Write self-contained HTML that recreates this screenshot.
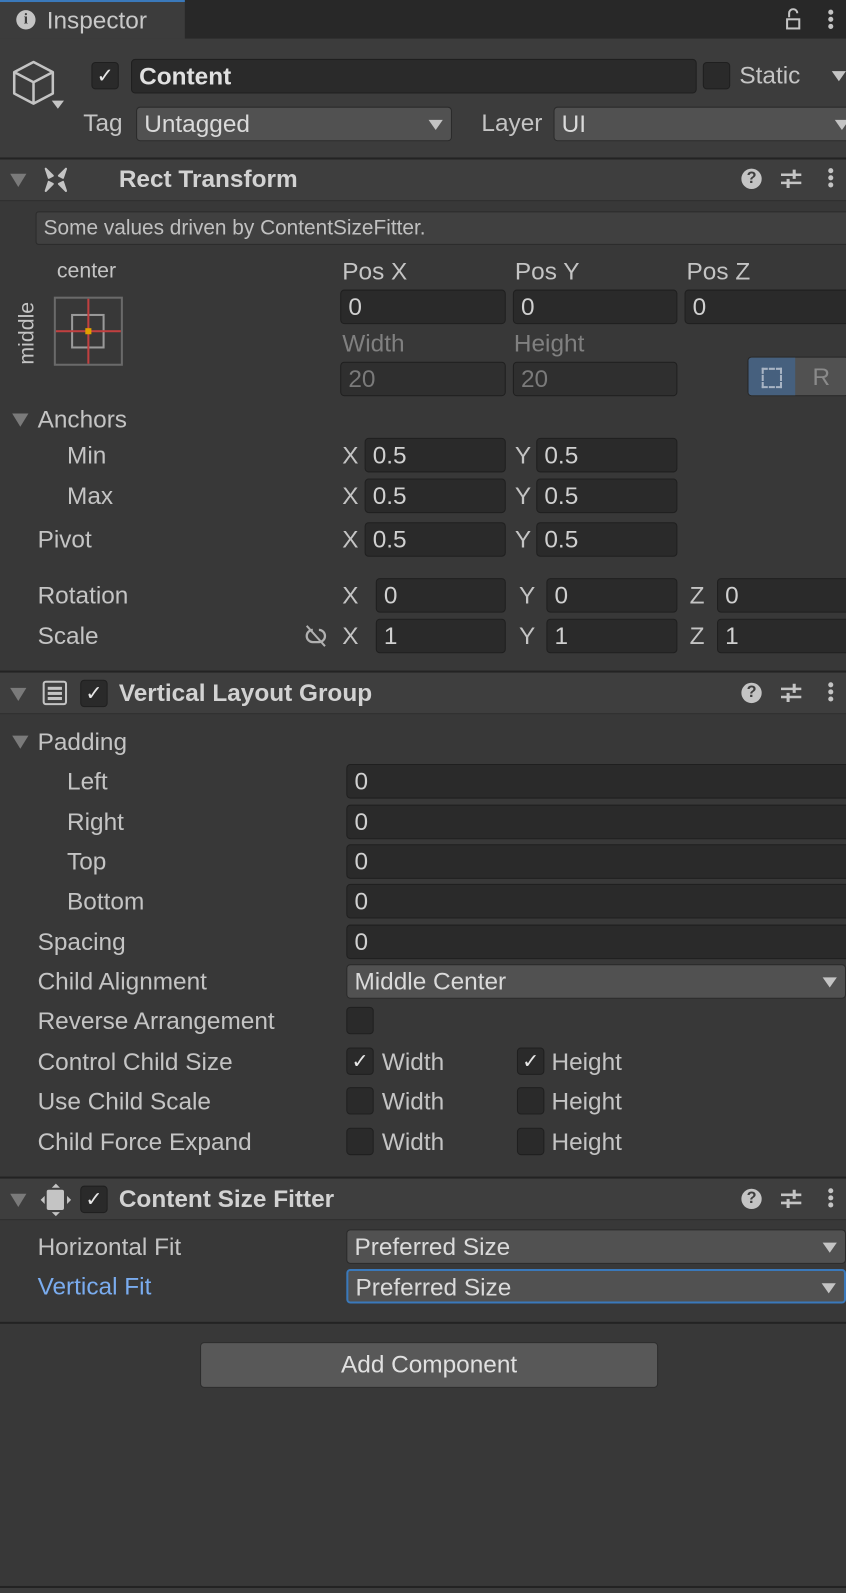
<!DOCTYPE html>
<html><head><meta charset="utf-8"><style>
html,body{margin:0;padding:0;background:#383838;width:846px;height:1593px;overflow:hidden}
#w{position:absolute;left:0;top:0;width:833px;height:1568px;transform:scale(1.0156,1.016);transform-origin:0 0;background:#383838;font-family:"Liberation Sans",sans-serif;color:#c4c4c4;font-size:24px}
#w div{position:absolute;box-sizing:border-box}
.t{line-height:28px;margin-top:0px;white-space:nowrap}
.b{font-weight:bold;color:#d2d2d2}
.f{background:#2a2a2a;border:1px solid #1f1f1f;border-radius:4px;height:34px;line-height:33px;padding-left:7px;color:#d0d0d0;white-space:nowrap}
.dd{background:#515151;border:1px solid #2a2a2a;border-radius:4px;height:34px;line-height:33px;padding-left:7px;color:#dadada;white-space:nowrap}
.dd:after{content:"";position:absolute;right:8px;top:12px;border-left:7px solid transparent;border-right:7px solid transparent;border-top:10px solid #c4c4c4}
.cb{width:27px;height:27px;background:#2a2a2a;border:1px solid #1f1f1f;border-radius:4px;color:#e6e6e6;text-align:center;line-height:26px;font-size:20px}
.hd{left:0;width:833px;background:#3e3e3e;border-top:2px solid #232323;border-bottom:1px solid #2e2e2e}
.tri{width:0;height:0;border-left:8px solid transparent;border-right:8px solid transparent;border-top:13px solid #7a7a7a}
.g{color:#808080}
</style></head><body><div id="w">
<div style="left:0;top:0;width:833px;height:38px;background:#282828"></div>
<div style="left:0;top:0;width:182px;height:38px;background:#3c3c3c;border-top:2px solid #3a79bb"></div>
<div style="left:16px;top:10px;width:19px;height:19px;border-radius:50%;background:#c4c4c4;color:#3c3c3c;font-weight:bold;font-size:15px;text-align:center;line-height:19px;font-family:'Liberation Serif',serif">i</div>
<div class="t" style="left:46px;top:7px;color:#c8c8c8">Inspector</div>
<svg style="position:absolute;left:773px;top:8px" width="16" height="22"><path d="M4 9V5a4 4 0 0 1 8 0" fill="none" stroke="#c4c4c4" stroke-width="2"/><rect x="2" y="11" width="12" height="9" fill="none" stroke="#c4c4c4" stroke-width="2"/></svg>
<svg style="position:absolute;left:814px;top:9px" width="8" height="22"><circle cx="4" cy="3" r="2.5" fill="#c4c4c4"/><circle cx="4" cy="10" r="2.5" fill="#c4c4c4"/><circle cx="4" cy="17" r="2.5" fill="#c4c4c4"/></svg>
<div style="left:0;top:38px;width:833px;height:118px;background:#3c3c3c"></div>
<svg style="position:absolute;left:10px;top:58px" width="58" height="52"><path d="M23 3 L42 13 L42 34 L23 44 L4 34 L4 13 Z M4 13 L23 23 L42 13 M23 23 L23 44" fill="none" stroke="#c4c4c4" stroke-width="2.5" stroke-linejoin="round"/><path d="M41 41 L53 41 L47 49 Z" fill="#c4c4c4"/></svg>
<div class="cb" style="left:90px;top:61px">✓</div>
<div class="f b" style="left:129px;top:58px;width:557px;color:#e0e0e0">Content</div>
<div class="cb" style="left:692px;top:61px"></div>
<div class="t" style="left:728px;top:61px">Static</div>
<div style="left:819px;top:70px;border-left:7px solid transparent;border-right:7px solid transparent;border-top:10px solid #c4c4c4"></div>
<div class="t" style="left:82px;top:108px">Tag</div>
<div class="dd" style="left:134px;top:105px;width:311px">Untagged</div>
<div class="t" style="left:474px;top:108px">Layer</div>
<div class="dd" style="left:545px;top:105px;width:300px">UI</div>
<div class="hd" style="top:155px;height:43px"></div>
<div class="tri" style="left:10px;top:171px"></div>
<svg style="position:absolute;left:41px;top:164px" width="28" height="26"><path d="M4 2 L11 9 L7 11 Z M24 2 L17 9 L21 11 Z M4 24 L11 17 L7 15 Z M24 24 L17 17 L21 15 Z" fill="#c4c4c4" stroke="#c4c4c4" stroke-width="2" stroke-linejoin="round"/></svg>
<div class="t b" style="left:117px;top:163px">Rect Transform</div>
<div style="left:730px;top:166px;width:20px;height:20px;border-radius:50%;background:#c4c4c4;color:#3e3e3e;font-weight:bold;font-size:16px;text-align:center;line-height:20px">?</div>
<svg style="position:absolute;left:768px;top:165px" width="22" height="22"><path d="M1 7H21M1 15H21" stroke="#c4c4c4" stroke-width="2.5"/><path d="M14 2V11M8 11V20" stroke="#c4c4c4" stroke-width="3"/></svg>
<svg style="position:absolute;left:814px;top:165px" width="8" height="22"><circle cx="4" cy="3" r="2.5" fill="#c4c4c4"/><circle cx="4" cy="10" r="2.5" fill="#c4c4c4"/><circle cx="4" cy="17" r="2.5" fill="#c4c4c4"/></svg>
<div style="left:35px;top:208px;width:805px;height:33px;background:#404040;border:1px solid #2a2a2a;border-radius:3px"></div>
<div class="t" style="left:43px;top:211px;font-size:20.5px;color:#c0c0c0">Some values driven by ContentSizeFitter.</div>
<div class="t" style="left:56px;top:253px;font-size:21px">center</div>
<div class="t" style="top:314px;font-size:21px;transform:rotate(-90deg);transform-origin:center;width:70px;text-align:center;left:-8px">middle</div>
<div style="left:53px;top:292px;width:68px;height:68px;border:2px solid #6a6a6a"></div>
<div style="left:70px;top:309px;width:33px;height:34px;border:2px solid #9a9a9a"></div>
<div style="left:55px;top:325px;width:64px;height:2px;background:#c04040"></div>
<div style="left:86px;top:294px;width:2px;height:64px;background:#c04040"></div>
<div style="left:84px;top:323px;width:6px;height:6px;background:#e0a000"></div>
<div class="t" style="left:337px;top:254px">Pos X</div>
<div class="t" style="left:507px;top:254px">Pos Y</div>
<div class="t" style="left:676px;top:254px">Pos Z</div>
<div class="f" style="left:335px;top:285px;width:163px">0</div>
<div class="f" style="left:505px;top:285px;width:162px">0</div>
<div class="f" style="left:674px;top:285px;width:170px">0</div>
<div class="t g" style="left:337px;top:325px">Width</div>
<div class="t g" style="left:506px;top:325px">Height</div>
<div class="f" style="left:335px;top:356px;width:163px;background:#2f2f2f;color:#7a7a7a">20</div>
<div class="f" style="left:505px;top:356px;width:162px;background:#2f2f2f;color:#7a7a7a">20</div>
<div style="left:736px;top:351px;width:100px;height:39px;background:#515151;border:1px solid #262626;border-radius:4px;overflow:hidden"></div>
<div style="left:737px;top:352px;width:46px;height:37px;background:#46607e;border-radius:3px 0 0 3px"></div>
<div style="left:750px;top:362px;width:20px;height:20px;border:2px dashed #a8b4c4"></div>
<div class="t" style="left:800px;top:358px;color:#8a8a8a">R</div>
<div class="tri" style="left:12px;top:407px"></div>
<div class="t" style="left:37px;top:400px">Anchors</div>
<div class="t" style="left:66px;top:435px">Min</div>
<div class="t" style="left:66px;top:475px">Max</div>
<div class="t" style="left:37px;top:518px">Pivot</div>
<div class="t" style="left:337px;top:435px">X</div><div class="f" style="left:359px;top:431px;width:139px">0.5</div>
<div class="t" style="left:507px;top:435px">Y</div><div class="f" style="left:528px;top:431px;width:139px">0.5</div>
<div class="t" style="left:337px;top:475px">X</div><div class="f" style="left:359px;top:471px;width:139px">0.5</div>
<div class="t" style="left:507px;top:475px">Y</div><div class="f" style="left:528px;top:471px;width:139px">0.5</div>
<div class="t" style="left:337px;top:518px">X</div><div class="f" style="left:359px;top:514px;width:139px">0.5</div>
<div class="t" style="left:507px;top:518px">Y</div><div class="f" style="left:528px;top:514px;width:139px">0.5</div>
<div class="t" style="left:37px;top:573px">Rotation</div>
<div class="t" style="left:37px;top:613px">Scale</div>
<svg style="position:absolute;left:298px;top:614px" width="26" height="24"><path d="M10 6a6 6 0 0 0 0 12h3M16 6a6 6 0 0 1 0 12h-3" fill="none" stroke="#b0b0b0" stroke-width="2.2"/><path d="M4 2L22 22" stroke="#b0b0b0" stroke-width="2"/></svg>
<div class="t" style="left:337px;top:573px">X</div><div class="f" style="left:370px;top:569px;width:128px">0</div>
<div class="t" style="left:511px;top:573px">Y</div><div class="f" style="left:538px;top:569px;width:129px">0</div>
<div class="t" style="left:679px;top:573px">Z</div><div class="f" style="left:706px;top:569px;width:140px">0</div>
<div class="t" style="left:337px;top:613px">X</div><div class="f" style="left:370px;top:609px;width:128px">1</div>
<div class="t" style="left:511px;top:613px">Y</div><div class="f" style="left:538px;top:609px;width:129px">1</div>
<div class="t" style="left:679px;top:613px">Z</div><div class="f" style="left:706px;top:609px;width:140px">1</div>
<div class="hd" style="top:660px;height:43px"></div>
<div class="tri" style="left:10px;top:677px"></div>
<div style="left:42px;top:670px;width:24px;height:24px;border:2px solid #c4c4c4;border-radius:3px"></div>
<div style="left:47px;top:676px;width:14px;height:3px;background:#c4c4c4"></div>
<div style="left:47px;top:681px;width:14px;height:3px;background:#c4c4c4"></div>
<div style="left:47px;top:686px;width:14px;height:3px;background:#c4c4c4"></div>
<div class="cb" style="left:79px;top:669px">✓</div>
<div class="t b" style="left:117px;top:669px">Vertical Layout Group</div>
<div style="left:730px;top:672px;width:20px;height:20px;border-radius:50%;background:#c4c4c4;color:#3e3e3e;font-weight:bold;font-size:16px;text-align:center;line-height:20px">?</div>
<svg style="position:absolute;left:768px;top:671px" width="22" height="22"><path d="M1 7H21M1 15H21" stroke="#c4c4c4" stroke-width="2.5"/><path d="M14 2V11M8 11V20" stroke="#c4c4c4" stroke-width="3"/></svg>
<svg style="position:absolute;left:814px;top:671px" width="8" height="22"><circle cx="4" cy="3" r="2.5" fill="#c4c4c4"/><circle cx="4" cy="10" r="2.5" fill="#c4c4c4"/><circle cx="4" cy="17" r="2.5" fill="#c4c4c4"/></svg>
<div class="tri" style="left:12px;top:724px"></div>
<div class="t" style="left:37px;top:717px">Padding</div>
<div class="t" style="left:66px;top:756px">Left</div><div class="f" style="left:341px;top:752px;width:505px">0</div>
<div class="t" style="left:66px;top:796px">Right</div><div class="f" style="left:341px;top:792px;width:505px">0</div>
<div class="t" style="left:66px;top:835px">Top</div><div class="f" style="left:341px;top:831px;width:505px">0</div>
<div class="t" style="left:66px;top:874px">Bottom</div><div class="f" style="left:341px;top:870px;width:505px">0</div>
<div class="t" style="left:37px;top:914px">Spacing</div><div class="f" style="left:341px;top:910px;width:505px">0</div>
<div class="t" style="left:37px;top:953px">Child Alignment</div><div class="dd" style="left:341px;top:949px;width:492px">Middle Center</div>
<div class="t" style="left:37px;top:992px">Reverse Arrangement</div><div class="cb" style="left:341px;top:991px"></div>
<div class="t" style="left:37px;top:1032px">Control Child Size</div>
<div class="cb" style="left:341px;top:1031px">✓</div><div class="t" style="left:376px;top:1032px">Width</div>
<div class="cb" style="left:509px;top:1031px">✓</div><div class="t" style="left:543px;top:1032px">Height</div>
<div class="t" style="left:37px;top:1071px">Use Child Scale</div>
<div class="cb" style="left:341px;top:1070px"></div><div class="t" style="left:376px;top:1071px">Width</div>
<div class="cb" style="left:509px;top:1070px"></div><div class="t" style="left:543px;top:1071px">Height</div>
<div class="t" style="left:37px;top:1111px">Child Force Expand</div>
<div class="cb" style="left:341px;top:1110px"></div><div class="t" style="left:376px;top:1111px">Width</div>
<div class="cb" style="left:509px;top:1110px"></div><div class="t" style="left:543px;top:1111px">Height</div>
<div class="hd" style="top:1158px;height:43px"></div>
<div class="tri" style="left:10px;top:1175px"></div>
<div style="left:46px;top:1171px;width:17px;height:20px;background:#c4c4c4;border-radius:2px"></div>
<div style="left:40px;top:1177px;border-top:4px solid transparent;border-bottom:4px solid transparent;border-right:4px solid #c4c4c4"></div>
<div style="left:66px;top:1177px;border-top:4px solid transparent;border-bottom:4px solid transparent;border-left:4px solid #c4c4c4"></div>
<div style="left:51px;top:1165px;border-left:4px solid transparent;border-right:4px solid transparent;border-bottom:4px solid #c4c4c4"></div>
<div style="left:51px;top:1193px;border-left:4px solid transparent;border-right:4px solid transparent;border-top:4px solid #c4c4c4"></div>
<div class="cb" style="left:79px;top:1167px">✓</div>
<div class="t b" style="left:117px;top:1167px">Content Size Fitter</div>
<div style="left:730px;top:1170px;width:20px;height:20px;border-radius:50%;background:#c4c4c4;color:#3e3e3e;font-weight:bold;font-size:16px;text-align:center;line-height:20px">?</div>
<svg style="position:absolute;left:768px;top:1169px" width="22" height="22"><path d="M1 7H21M1 15H21" stroke="#c4c4c4" stroke-width="2.5"/><path d="M14 2V11M8 11V20" stroke="#c4c4c4" stroke-width="3"/></svg>
<svg style="position:absolute;left:814px;top:1169px" width="8" height="22"><circle cx="4" cy="3" r="2.5" fill="#c4c4c4"/><circle cx="4" cy="10" r="2.5" fill="#c4c4c4"/><circle cx="4" cy="17" r="2.5" fill="#c4c4c4"/></svg>
<div class="t" style="left:37px;top:1214px">Horizontal Fit</div><div class="dd" style="left:341px;top:1210px;width:492px">Preferred Size</div>
<div class="t" style="left:37px;top:1253px;color:#7aacef">Vertical Fit</div><div class="dd" style="left:341px;top:1249px;width:492px;border:2px solid #3a79bb">Preferred Size</div>
<div style="left:0;top:1301px;width:833px;height:2px;background:#232323"></div>
<div style="left:197px;top:1321px;width:451px;height:45px;background:#585858;border:1px solid #2c2c2c;border-radius:4px;text-align:center;line-height:43px;color:#e0e0e0">Add Component</div>
<div style="left:0;top:1561px;width:833px;height:2px;background:#232323"></div>
<div style="left:0;top:1563px;width:833px;height:5px;background:#3c3c3c"></div>
</div></body></html>
